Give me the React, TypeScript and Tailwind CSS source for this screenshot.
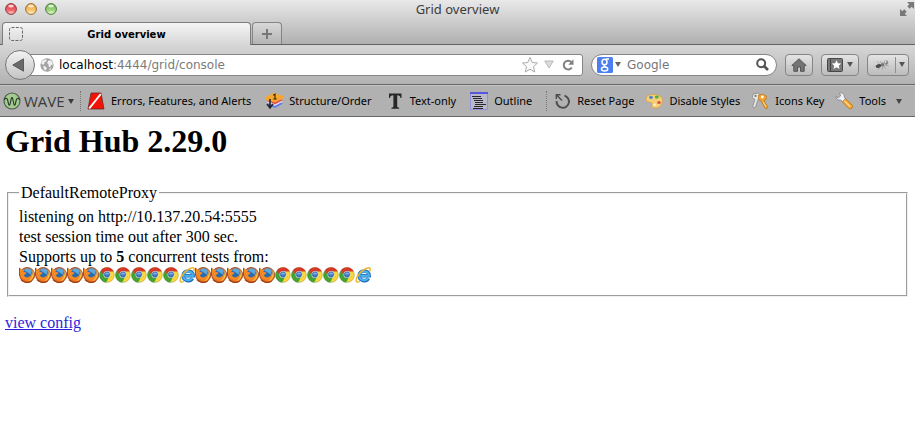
import type { ReactNode } from "react";

function Caret({ className = "" }: { className?: string }) {
  return (
    <svg viewBox="0 0 6 5" className={`h-[5px] w-[6px] shrink-0 ${className}`} aria-hidden="true">
      <path d="M0 0h6L3 5z" fill="currentColor" />
    </svg>
  );
}

function TrafficLight({ label, id, edge, from, to }: { label: string; id: string; edge: string; from: string; to: string }) {
  return (
    <button type="button" aria-label={label} className="block size-3">
      <svg viewBox="0 0 12 12" className="size-3">
        <defs>
          <linearGradient id={id} x1="0" y1="0" x2="0" y2="1">
            <stop offset="0" stopColor={from} />
            <stop offset="1" stopColor={to} />
          </linearGradient>
        </defs>
        <circle cx="6" cy="6" r="5.4" fill={`url(#${id})`} stroke={edge} strokeWidth="1" />
        <ellipse cx="6" cy="3" rx="2.8" ry="1.6" fill="#fff" opacity=".75" />
        <ellipse cx="6" cy="9.3" rx="2.8" ry="1.4" fill="#fff" opacity=".35" />
      </svg>
    </button>
  );
}

function GlobeIcon() {
  return (
    <svg viewBox="0 0 16 16" className="size-[14px] shrink-0" aria-hidden="true">
      <circle cx="8" cy="8" r="7.6" fill="#a3a3a3" />
      <path d="M2 3.8 5 1.6l3 .3-.8 1.8-2 1.2-.4 2.3-1.7.4L1.4 6zM9.5 2.8l2.7-.3 2.3 3-.2 2.8-1.6-.6-1 2.8-1.8-.8-.3-2.8L8 6zM3.6 9l3 .6 1.3 1.8-1.5 3-1.8-1.3zM11 12l2-1-.9 2-1.7.8z" fill="#f1f1f1" />
    </svg>
  );
}

function WaveLogo() {
  return (
    <svg viewBox="0 0 18 18" className="size-[18px] shrink-0" aria-hidden="true">
      <circle cx="9" cy="9" r="8" fill="#a2cb90" stroke="#4c5a48" strokeWidth="1.1" />
      <path d="M1.4 8C2.3 6 4 5.3 4.6 8l1 4c.4 1.5 1.2 1.5 1.5 0l1.2-5.5c.3-1.2 1-1.2 1.3 0l1.2 5.5c.3 1.5 1.1 1.5 1.5 0l1-4c.7-2.6 2.4-2 3.2 0" fill="none" stroke="#2c382a" strokeWidth="1.1" />
    </svg>
  );
}

function ErrorsIcon() {
  return (
    <svg viewBox="0 0 18 18" className="size-[18px] shrink-0" aria-hidden="true">
      <path d="M4 1h10l3 16H1z" fill="#f21305" stroke="#6a2a26" strokeWidth=".8" />
      <path d="M13.8 2 2.2 16.5" stroke="#fff" strokeWidth="2" />
    </svg>
  );
}

function StructureIcon() {
  return (
    <svg viewBox="0 0 18 18" className="size-[18px] shrink-0" aria-hidden="true">
      <path d="M2 12.500 9 9l9 2.500-8 4.500z" fill="#5b7bea" />
      <path d="M2 10.500 9 7l9 2.500-8 4.500z" fill="#dcd7e8" />
      <path d="M2 8.800 9 6l9 2-8 4.300z" fill="#e3484b" />
      <path d="M0 5.500 8.500 1l9.500 3v2.500l-8 4-10-3z" fill="#f9a72b" />
      <path d="M8.200 3.300 10 2.200v4.700M8.300 7h3.400" fill="none" stroke="#332211" strokeWidth="1.100" />
      <path d="M5 7v8M2 12l3 4L8 12" fill="none" stroke="#26262c" strokeWidth="1.600" />
    </svg>
  );
}

function TextOnlyIcon() {
  return (
    <svg viewBox="0 0 18 18" className="size-[18px] shrink-0" aria-hidden="true">
      <path d="M3 1.500h12.500V6h-1c-.3-1.900-1-2.800-3.300-2.800V14c0 1.300.5 1.600 2 1.700v1H5.400v-1c1.500-.1 2-.4 2-1.700V3.200C5 3.200 4.300 4.100 4 6H3z" fill="#272727" />
    </svg>
  );
}

function OutlineIcon() {
  return (
    <svg viewBox="0 0 18 18" className="size-[18px] shrink-0" aria-hidden="true">
      <path d="M.5.5h17v17H.5z" fill="#b8b8c6" stroke="#9292dc" />
      <path d="M0 1h18" stroke="#5656df" strokeWidth="2" />
      <path d="M2 4.500h9M3 6.500h9M4 8.500h9M5 10.500h8M5 12.500h11M4 14.500h9M3 16.500h10" stroke="#26262b" strokeWidth="1" />
    </svg>
  );
}

function ResetIcon() {
  return (
    <svg viewBox="0 0 18 18" className="size-[18px] shrink-0" aria-hidden="true">
      <path d="M11.500 3.600A6.200 6.200 0 1 1 3.600 9" fill="none" stroke="#4c4c4c" strokeWidth="1.900" />
      <path d="M7.500 2.800H3.300V7M3.300 2.800 9 8.500" fill="none" stroke="#4c4c4c" strokeWidth="1.400" />
    </svg>
  );
}

function PaletteIcon() {
  return (
    <svg viewBox="0 0 18 18" className="size-[18px] shrink-0" aria-hidden="true">
      <path d="M1 7C1 3.500 5 2.300 9.500 2.500c4.500.2 8 2.500 8 6 0 4-3 7.500-6.500 7.500-3.800 0-4.700-1.300-4-3.300.6-1.800-.5-2.300-2.600-2.500C2 10 1 9 1 7z" fill="#f4cf77" stroke="#d99c48" strokeWidth=".8" />
      <ellipse cx="6" cy="5.500" rx="1.900" ry="1.400" fill="#3f83d6" />
      <ellipse cx="11.800" cy="5" rx="2" ry="1.500" fill="#4fae3c" />
      <ellipse cx="14" cy="10.500" rx="1.800" ry="1.500" fill="#dd4f46" />
      <ellipse cx="9.700" cy="12.800" rx="1.600" ry="1.200" fill="#faf0d0" />
    </svg>
  );
}

function KeysIcon() {
  return (
    <svg viewBox="0 0 18 18" className="size-[18px] shrink-0" aria-hidden="true">
      <path d="M2 2 7 1l2.500 2.300L8 6.500l-1 1L4.500 15l-2 1-.7-2L4 7.500 1.200 5.500z" fill="#e5e5e5" stroke="#888" strokeWidth=".8" />
      <circle cx="4.500" cy="3.900" r="1.100" fill="#777" />
      <path d="m7.500 3 5-.8L15.500 4l-.7 4-2 .8 4 6-.8 2-2-.5-3.700-7L7.500 7.500z" fill="#f5a22d" stroke="#b57b2e" strokeWidth=".8" />
      <circle cx="11.300" cy="5" r="1.400" fill="#fff" />
      <path d="m12 9.500 3 5.500" stroke="#fddb86" />
    </svg>
  );
}

function WrenchIcon() {
  return (
    <svg viewBox="0 0 18 18" className="size-[18px] shrink-0" aria-hidden="true">
      <path d="M7 9.500 10.200 6.200l7.300 7.300c.8 1.800-1.500 4-3.300 3.200z" fill="#f6a32b" stroke="#b8741d" strokeWidth=".8" />
      <path d="m9.500 9 5.800 6" stroke="#ffd98a" strokeWidth="1.300" />
      <path d="M4.500 1c2.500-.8 5.300 1.500 4.700 4l1.300 1.800-3 2.700L5.500 8C3.200 8.500.6 6.800.8 4.200L3.200 6 5.700 3.800z" fill="#f2f4f8" stroke="#7c8088" strokeWidth=".8" />
    </svg>
  );
}

function FirefoxIcon() {
  return (
    <svg viewBox="0 0 16 16" className="size-4 shrink-0" role="img" aria-label="firefox">
      <circle cx="8.200" cy="8" r="7.500" fill="#e8791f" stroke="#8a3a1c" strokeWidth=".8" />
      <circle cx="8.800" cy="6.400" r="5" fill="#2f6aaa" />
      <path d="M5 3.200C7 .9 11.300 1 13 3.800l-1.500 3.400L8.600 5.400z" fill="#5fa8dc" />
      <path d="M.6.8 3 2.800l2.300.3L4.200 4.800l3.200.8-.8 1.600-1.800.8C5.300 10.300 8 11 10.200 9.800c1.600-.9 2.200-2.300 2-3.900l1.500 1.300c0 3.400-2.700 5.800-5.900 5.600C3.800 12.500 1 9.500.7 6z" fill="#f58a25" />
      <path d="M13.400 3c2.200 2.800 1.800 7.300-1.200 9.800-1.200 1-2.600 1.400-4 1.400 3.800-1.400 6-4.800 5.200-11.200z" fill="#ffbe3c" />
      <path d="M.8.800C.2 4 .2 6 .7 8.500" fill="none" stroke="#7c3520" strokeWidth=".9" />
      <path d="M2 12.500c2 2.500 6.500 4 10.500 1.800" fill="none" stroke="#a63c12" strokeWidth="1.300" />
    </svg>
  );
}

function ChromeIcon() {
  return (
    <svg viewBox="0 0 16 16" className="size-4 shrink-0" role="img" aria-label="chrome">
      <circle cx="8" cy="8" r="7.600" fill="#f7d43c" />
      <path d="M8 8 1.500 4.100A7.600 7.600 0 0 0 7.200 15.600L9.800 10z" fill="#43a336" />
      <path d="M8 4.500h6.800A7.600 7.600 0 0 0 1.700 3.700L4.800 8z" fill="#d9362c" />
      <circle cx="8" cy="7.500" r="3.500" fill="#d9e2d8" />
      <circle cx="8" cy="7.500" r="2.900" fill="#3c72b8" />
      <ellipse cx="8" cy="6.600" rx="1.800" ry="1.200" fill="#7fb0e4" />
      <circle cx="8" cy="8" r="7.500" fill="none" stroke="#6b6b3a" strokeWidth=".5" opacity=".5" />
    </svg>
  );
}

function ExplorerIcon() {
  return (
    <svg viewBox="0 0 16 16" className="size-4 shrink-0" role="img" aria-label="internet explorer">
      <path d="M13.500 11.300c-2.300 3.700-9.300 3-9.300-2.700 0-6.200 10-6.200 10 .2H5.700" fill="none" stroke="#1b6fc0" strokeWidth="3.500" />
      <path d="M13.400 11C11 14.500 4.400 13.800 4.400 8.700c0-5.700 9.600-5.700 9.600.1H5.700" fill="none" stroke="#4db2ee" strokeWidth="1.900" />
      <path d="M14.500 4.500C16 1.800 15 .3 12.500 1 8 2.300 3 7 1.600 11.200c-1.200 3.600.2 4.700 3.200 3.100" fill="none" stroke="#eeb62d" strokeWidth="1.500" />
    </svg>
  );
}

function ToolbarButton({ icon, children }: { icon: ReactNode; children: ReactNode }) {
  return (
    <button type="button" className="flex shrink-0 items-center gap-1.5 whitespace-nowrap">
      {icon}
      {children}
    </button>
  );
}

function Separator() {
  return <span className="h-5 shrink-0 border-l border-dotted border-[#777]" />;
}

function TitleBar() {
  return (
    <header className="border-b border-[#626262] bg-linear-to-b from-[#e9e9e9] to-[#b0b0b0]">
      <div className="grid h-[22px] grid-cols-[1fr_auto_1fr] items-center">
        <div className="flex gap-2 pb-1 pl-[5px]">
          <TrafficLight label="Close" id="light-close" edge="#8f3a3d" from="#d9303c" to="#ff8c8c" />
          <TrafficLight label="Minimize" id="light-min" edge="#a06c2b" from="#e89d32" to="#ffe096" />
          <TrafficLight label="Zoom" id="light-zoom" edge="#4d7c38" from="#62ae4c" to="#c5f0a0" />
        </div>
        <span className="pb-1 text-[13px] leading-4 text-[#3c3c3c]">Grid overview</span>
        <button type="button" aria-label="Full screen" className="mr-px mb-1 justify-self-end">
          <svg viewBox="0 0 14 14" className="size-[14px]" fill="#787878">
            <path d="M7 0h7v7l-2.300-2.300-2 2-2.400-2.400 2-2zM0 7l2.300 2.300 2-2 2.400 2.400-2 2L7 14H0z" />
          </svg>
        </button>
      </div>
      <div className="flex h-[22px] items-stretch gap-px pl-[2px]">
        <button
          type="button"
          className="-mb-px flex w-[249px] items-center rounded-t-[4px] border border-b-0 border-[#7d7d7d] bg-linear-to-b from-[#f6f6f6] to-[#d6d6d6] px-1.5 font-['DejaVu_Sans',sans-serif] text-[10px] font-bold text-black"
        >
          <svg viewBox="0 0 14 14" className="size-[14px] shrink-0" aria-hidden="true">
            <rect x=".5" y=".5" width="13" height="13" rx="2" fill="none" stroke="#686868" strokeDasharray="3 1.3" />
          </svg>
          <span className="flex-1 pr-3.5 text-center">Grid overview</span>
        </button>
        <button
          type="button"
          aria-label="New tab"
          className="flex w-[30px] items-center justify-center rounded-t-[4px] border border-b-0 border-[#858585] bg-linear-to-b from-[#d8d8d8] to-[#b4b4b4]"
        >
          <svg viewBox="0 0 10 10" className="size-[10px]">
            <path d="M5 0v10M0 5h10" stroke="#777" strokeWidth="2" />
          </svg>
        </button>
      </div>
    </header>
  );
}

const NAV_BUTTON =
  "flex h-[22px] items-center justify-center rounded-[4px] border border-[#858585] bg-linear-to-b from-[#e4e4e4] to-[#bcbcbc] text-[#555]";

function NavigationBar() {
  return (
    <nav className="flex h-10 items-center gap-2 border-b border-[#666] bg-linear-to-b from-[#d6d6d6] to-[#b2b2b2] pr-1.5 pl-[5px] font-['DejaVu_Sans',sans-serif] text-[12px] leading-4">
      <div className="flex min-w-0 flex-1 items-center">
        <button
          type="button"
          aria-label="Back"
          className="z-10 flex size-[30px] shrink-0 items-center justify-center rounded-full border border-[#777] bg-linear-to-b from-[#f2f2f2] to-[#c4c4c4]"
        >
          <svg viewBox="0 0 12 14" className="mr-1 h-[14px] w-3">
            <path d="M.8 7 11.500.8v12.400z" fill="#696969" stroke="#484848" strokeWidth=".8" />
          </svg>
        </button>
        <div className="-ml-2 flex h-[22px] min-w-0 flex-1 items-center rounded-r-[3px] border border-[#858585] bg-white pr-2 pl-3">
          <GlobeIcon />
          <div className="relative ml-[5px] h-4 flex-1">
            <input
              aria-label="Address"
              defaultValue="localhost:4444/grid/console"
              className="absolute inset-0 w-full bg-transparent text-transparent caret-black outline-none"
            />
            <span aria-hidden="true" className="pointer-events-none block whitespace-nowrap text-[#7b7b7b]">
              <span className="text-black">localhost</span>:4444/grid/console
            </span>
          </div>
          <button type="button" aria-label="Bookmark this page">
            <svg viewBox="0 0 18 18" className="size-[18px]">
              <path d="m9 1.500 2.200 5 5.300.5-4 3.600 1.200 5.400L9 13.200 4.300 16l1.200-5.400-4-3.600 5.300-.5z" fill="#fafafa" stroke="#aaa" strokeLinejoin="round" />
            </svg>
          </button>
          <button type="button" aria-label="Show history" className="ml-[5px]">
            <svg viewBox="0 0 10 9" className="h-[9px] w-[10px]">
              <path d="M.8 1h8.400L5 8z" fill="#ddd" stroke="#aaa" strokeWidth=".8" />
            </svg>
          </button>
          <button type="button" aria-label="Reload" className="ml-2">
            <svg viewBox="0 0 12 12" className="size-3">
              <path d="M9.300 3A4.400 4.400 0 1 0 9.800 8.500" fill="none" stroke="#808080" strokeWidth="2" />
              <path d="M11.500.3v5.400H6.200z" fill="#808080" />
            </svg>
          </button>
        </div>
      </div>

      <div className="flex h-[22px] w-[186px] shrink-0 items-center rounded-full border border-[#858585] bg-white pr-[7px] pl-[5px]">
        <button type="button" aria-label="Search engine" className="flex items-center gap-0.5 text-[#666]">
          <svg viewBox="0 0 16 16" className="size-4">
            <rect width="16" height="16" rx="1.5" fill="#4c7ff0" />
            <ellipse cx="7.5" cy="5" rx="2.5" ry="2.8" fill="none" stroke="#fff" strokeWidth="1.5" />
            <path d="M9 2h3M8 7.500c-2.300 1.500-.3 2 1 2.700" fill="none" stroke="#fff" strokeWidth="1.4" />
            <ellipse cx="7.6" cy="12" rx="3.1" ry="2" fill="none" stroke="#fff" strokeWidth="1.5" />
          </svg>
          <Caret />
        </button>
        <input
          aria-label="Search"
          placeholder="Google"
          className="ml-1.5 min-w-0 flex-1 bg-transparent outline-none placeholder:text-[#777]"
        />
        <button type="button" aria-label="Go">
          <svg viewBox="0 0 13 13" className="size-[13px]">
            <circle cx="5.2" cy="5.2" r="4" fill="none" stroke="#555" strokeWidth="2" />
            <path d="m8 8 4 4" stroke="#555" strokeWidth="2.6" />
          </svg>
        </button>
      </div>

      <button type="button" aria-label="Home" className={`${NAV_BUTTON} w-7 shrink-0`}>
        <svg viewBox="0 0 16 14" className="h-[14px] w-4">
          <path d="M8 .8.800 7.500h2V13.300h3.700V9h3v4.300h3.700V7.500h2z" fill="#747474" stroke="#4d4d4d" strokeWidth=".9" />
        </svg>
      </button>
      <button type="button" aria-label="Bookmarks" className={`${NAV_BUTTON} w-[38px] shrink-0 gap-1`}>
        <svg viewBox="0 0 16 14" className="h-[14px] w-4">
          <rect x=".5" y=".5" width="15" height="13" rx="1" fill="#787878" stroke="#484848" />
          <path d="M3.500 1v12" stroke="#444" />
          <path d="m9.500 2.300 1.400 3 3.300.3-2.500 2.200.8 3.300-3-1.800-3 1.800.8-3.300-2.500-2.200 3.300-.3z" fill="#fff" />
        </svg>
        <Caret />
      </button>
      <div className={`${NAV_BUTTON} w-[42px] shrink-0`}>
        <button type="button" aria-label="Firebug" className="flex flex-1 justify-center">
          <svg viewBox="0 0 16 14" className="h-[14px] w-4">
            <path d="M3 3.500 6.500 7M6 3l2 3M1 8l5-1M4 12l3-4M8 12l1-4M12 11 9.500 7.500M15 8l-5-1" stroke="#a2a2a2" strokeWidth=".9" />
            <path d="m7.500 5 4-3 2.500.5-3 3.500z" fill="#b5b5b5" />
            <ellipse cx="4.500" cy="8" rx="2.800" ry="1.900" fill="#4c4c4c" transform="rotate(-20 4.500 8)" />
            <circle cx="8.500" cy="6.700" r="1.700" fill="#777" />
            <circle cx="12.300" cy="4.700" r="2" fill="#8b8b8b" />
            <circle cx="11.500" cy="3.800" r=".9" fill="#eee" />
          </svg>
        </button>
        <button type="button" aria-label="Firebug options" className="flex h-4 w-[13px] items-center justify-center border-l border-[#909090]">
          <Caret />
        </button>
      </div>
    </nav>
  );
}

function WaveToolbar() {
  return (
    <div
      role="toolbar"
      aria-label="WAVE"
      className="flex h-8 items-center border-t border-b border-t-[#c6c6c6] border-b-[#666] bg-[#b1b1b1] pl-[3px] text-[11px] leading-4 text-black"
    >
      <button type="button" className="flex w-[77px] shrink-0 items-center gap-[3px] text-[#3b3b3b]">
        <WaveLogo />
        <span className="font-['Open_Sans',sans-serif] text-[15px] leading-4">WAVE</span>
        <Caret />
      </button>
      <Separator />
      <div className="flex gap-3.5 pr-3.5 pl-1.5">
        <ToolbarButton icon={<ErrorsIcon />}>Errors, Features, and Alerts</ToolbarButton>
        <ToolbarButton icon={<StructureIcon />}>Structure/Order</ToolbarButton>
        <ToolbarButton icon={<TextOnlyIcon />}>Text-only</ToolbarButton>
        <ToolbarButton icon={<OutlineIcon />}>Outline</ToolbarButton>
      </div>
      <Separator />
      <div className="flex gap-[11px] pl-1.5">
        <ToolbarButton icon={<ResetIcon />}>Reset Page</ToolbarButton>
        <ToolbarButton icon={<PaletteIcon />}>Disable Styles</ToolbarButton>
        <ToolbarButton icon={<KeysIcon />}>Icons Key</ToolbarButton>
        <ToolbarButton icon={<WrenchIcon />}>
          Tools
          <Caret className="ml-1 text-[#444]" />
        </ToolbarButton>
      </div>
    </div>
  );
}

const SLOTS = ["firefox", "chrome", "explorer", "firefox", "chrome", "explorer"];

function BrowserSlots() {
  return (
    <div className="flex">
      {SLOTS.map((name, i) => {
        if (name === "explorer") return <ExplorerIcon key={i} />;
        const Icon = name === "firefox" ? FirefoxIcon : ChromeIcon;
        return [0, 1, 2, 3, 4].map((n) => <Icon key={`${i}-${n}`} />);
      })}
    </div>
  );
}

export default function App() {
  return (
    <div className="min-h-screen overflow-x-hidden bg-white font-['Noto_Sans',sans-serif]">
      <TitleBar />
      <NavigationBar />
      <WaveToolbar />
      <main className="px-[5px] pt-1.5 font-['Liberation_Serif',serif] text-base leading-5 text-black">
        <h1 className="text-[32px] leading-9 font-bold">Grid Hub 2.29.0</h1>
        <fieldset className="mx-0.5 mt-6 border-2 border-[#f0f0f0] px-2.5 pt-1 pb-3 [border-style:groove]">
          <legend className="px-0.5">DefaultRemoteProxy</legend>
          <p>listening on http://10.137.20.54:5555</p>
          <p>test session time out after 300 sec.</p>
          <p>
            Supports up to <b>5</b> concurrent tests from:
          </p>
          <BrowserSlots />
        </fieldset>
        <a href="#config" className="mt-4 inline-block text-[#2a1fdc] underline">
          view config
        </a>
      </main>
    </div>
  );
}
